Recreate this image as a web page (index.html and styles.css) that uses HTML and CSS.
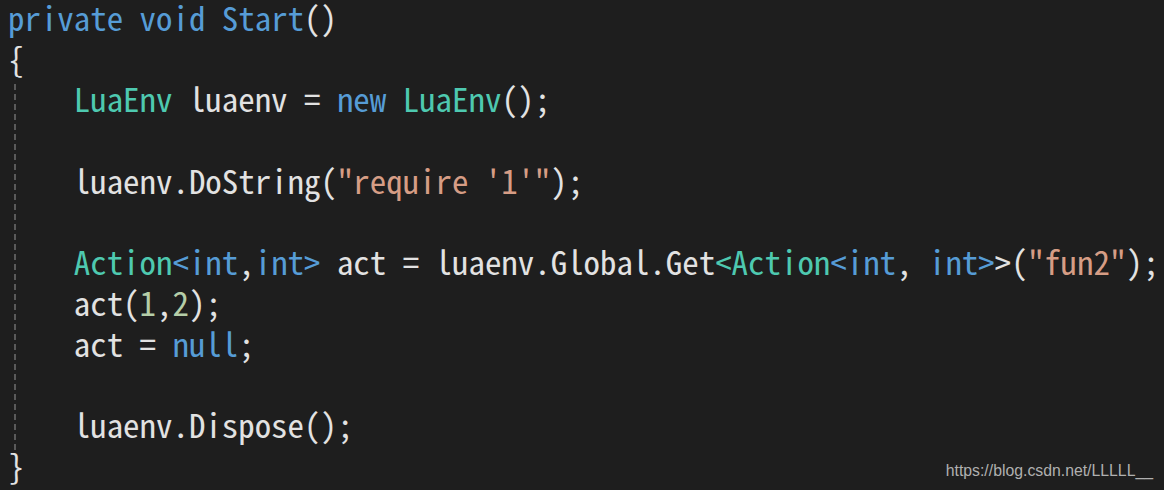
FILE: index.html
```html
<!DOCTYPE html>
<html lang="en">
<head>
<meta charset="utf-8">
<title>Code</title>
<link rel="stylesheet" href="styles.css">
</head>
<body>
<div class="editor">
<pre class="code"><span class="kw">private</span> <span class="kw">void</span> <span class="kw">Start</span>()
{
    <span class="ty">LuaEnv</span> luaenv = <span class="kw">new</span> <span class="ty">LuaEnv</span>();

    luaenv.DoString(<span class="str">"require '1'"</span>);

    <span class="ty">Action</span><span class="kw">&lt;int</span>,<span class="kw">int&gt;</span> act = luaenv.Global.Get<span class="ty">&lt;Action</span><span class="kw">&lt;int</span>, <span class="kw">int&gt;</span>&gt;(<span class="str">"fun2"</span>);
    act(<span class="num">1</span>,<span class="num">2</span>);
    act = <span class="kw">null</span>;

    luaenv.Dispose();
}</pre>
<div class="guide"></div>
<div class="watermark">https://blog.csdn.net/LLLLL__</div>
</div>
</body>
</html>
```
FILE: styles.css
```css
html, body {
  margin: 0;
  padding: 0;
  background: #1e1e1e;
}
.editor {
  position: relative;
  width: 1164px;
  height: 490px;
  overflow: hidden;
  background: #1e1e1e;
}
.code {
  margin: -3px 0 0 0;
  padding: 0 0 0 8px;
  font-family: "Noto Sans Mono CJK SC", "Noto Sans CJK SC", "Liberation Mono", monospace;
  font-feature-settings: "hwid";
  font-size: 32.9px;
  line-height: 40.7px;
  color: #e2e2e2;
  white-space: pre;
}
.kw { color: #569cd6; }
.ty { color: #4ec9b0; }
.str { color: #d69d85; }
.num { color: #b5cea8; }
.guide {
  position: absolute;
  left: 14px;
  top: 84px;
  width: 0;
  height: 366px;
  border-left: 2px dashed #5a5a5a;
}
.watermark {
  position: absolute;
  right: 11px;
  bottom: 10px;
  font-family: "Liberation Sans", Arial, sans-serif;
  font-size: 15.8px;
  color: #b0b0b0;
}
```
